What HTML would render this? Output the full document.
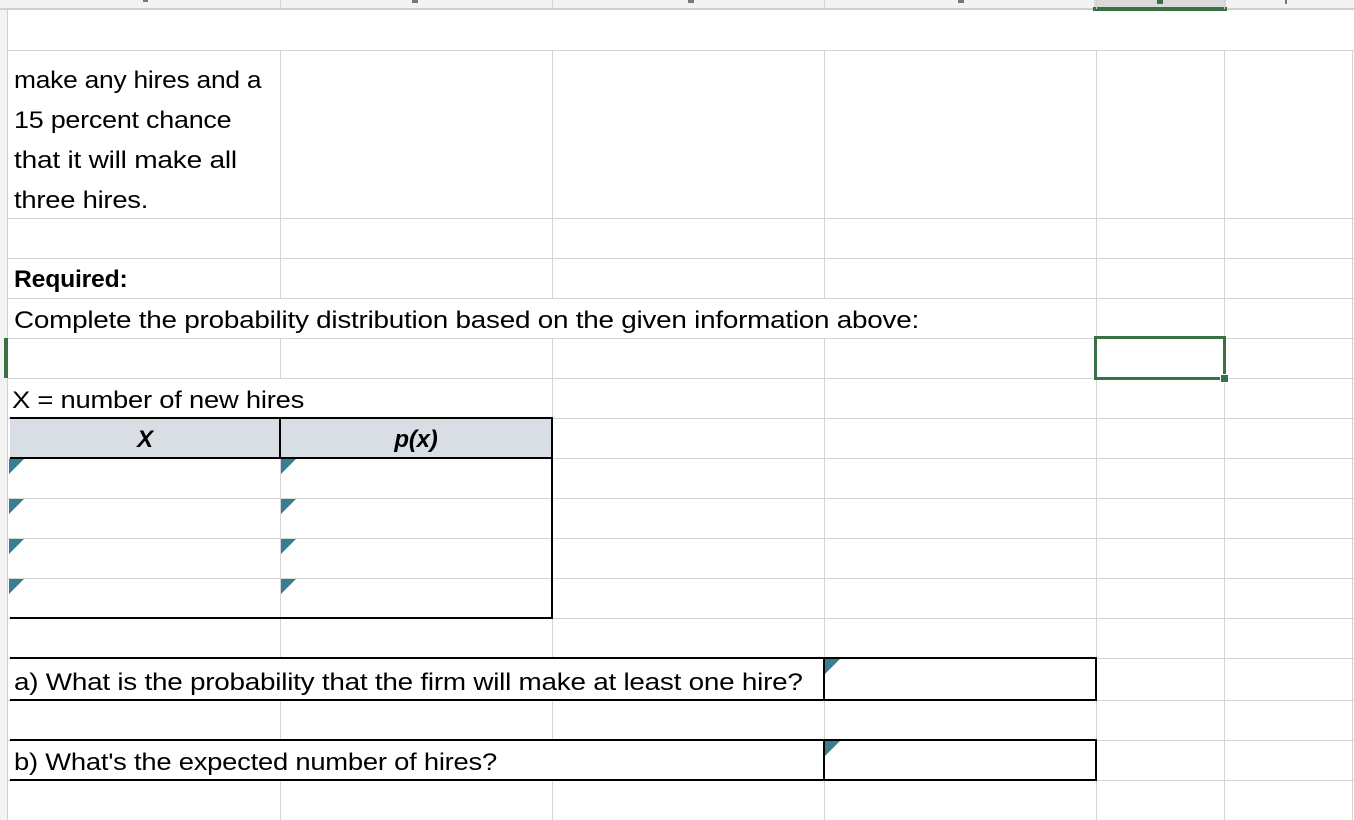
<!DOCTYPE html>
<html><head><meta charset="utf-8"><style>
*{margin:0;padding:0;box-sizing:border-box}
body{width:1354px;height:820px;position:relative;overflow:hidden;background:#fff;font-family:"Liberation Sans",Arial,sans-serif;color:#000}
.a{position:absolute}
.h{position:absolute;height:1px;background:#d4d4d4}
.v{position:absolute;width:1px;background:#d4d4d4}
.t{position:absolute;font-size:24px;line-height:40px;white-space:nowrap;letter-spacing:-0.2px;transform-origin:0 50%;transform:scaleX(1.15)}
.tri{position:absolute;width:0;height:0;border-top:15px solid #3a7d91;border-right:15px solid transparent}
.bk{position:absolute;background:#000}
</style></head><body>
<div class="a" style="left:0;top:0;width:1354px;height:9px;background:#f3f3f3"></div>
<div class="a" style="left:1094px;top:0;width:132px;height:8px;background:#dadada"></div>
<div class="a" style="left:0;top:8px;width:1354px;height:2px;background:#d0d0d0"></div>
<div class="a" style="left:1093px;top:7px;width:134px;height:4px;background:#3a7046"></div>
<div class="v" style="left:280px;top:0;height:9px"></div>
<div class="v" style="left:552px;top:0;height:9px"></div>
<div class="v" style="left:824px;top:0;height:9px"></div>
<div class="v" style="left:1096px;top:0;height:9px"></div>
<div class="v" style="left:1224px;top:0;height:9px"></div>
<div class="a" style="left:143px;top:0;width:5px;height:2px;background:#777"></div>
<div class="a" style="left:412px;top:0;width:6px;height:3px;background:#777"></div>
<div class="a" style="left:688px;top:0;width:6px;height:3px;background:#777"></div>
<div class="a" style="left:958px;top:0;width:6px;height:3px;background:#777"></div>
<div class="a" style="left:1157px;top:0;width:6px;height:4px;background:#3a7046"></div>
<div class="a" style="left:1285px;top:0;width:2px;height:4px;background:#777"></div>
<div class="a" style="left:0;top:10px;width:8px;height:810px;background:#f3f3f3;border-right:1px solid #d0d0d0"></div>
<div class="a" style="left:4px;top:338px;width:4px;height:40px;background:#3a7046"></div>

<div class="h" style="left:8px;top:50px;width:1346px"></div>
<div class="h" style="left:8px;top:218px;width:1346px"></div>
<div class="h" style="left:8px;top:258px;width:1346px"></div>
<div class="h" style="left:8px;top:298px;width:1346px"></div>
<div class="h" style="left:8px;top:338px;width:1346px"></div>
<div class="h" style="left:8px;top:378px;width:1346px"></div>
<div class="h" style="left:8px;top:418px;width:1346px"></div>
<div class="h" style="left:8px;top:458px;width:1346px"></div>
<div class="h" style="left:8px;top:498px;width:1346px"></div>
<div class="h" style="left:8px;top:538px;width:1346px"></div>
<div class="h" style="left:8px;top:578px;width:1346px"></div>
<div class="h" style="left:8px;top:618px;width:1346px"></div>
<div class="h" style="left:8px;top:658px;width:1346px"></div>
<div class="h" style="left:8px;top:700px;width:1346px"></div>
<div class="h" style="left:8px;top:740px;width:1346px"></div>
<div class="h" style="left:8px;top:780px;width:1346px"></div>
<div class="v" style="left:280px;top:50px;height:770px"></div>
<div class="v" style="left:552px;top:50px;height:770px"></div>
<div class="v" style="left:824px;top:50px;height:770px"></div>
<div class="v" style="left:1096px;top:50px;height:770px"></div>
<div class="v" style="left:1224px;top:50px;height:770px"></div>
<div class="v" style="left:1352px;top:50px;height:770px"></div>
<div class="a" style="left:10px;top:299px;width:1080px;height:39px;background:#fff"></div>
<div class="a" style="left:10px;top:379px;width:540px;height:39px;background:#fff"></div>

<div class="t" style="left:14px;top:61px;transform:scaleX(1.097)">make any hires and a</div>
<div class="t" style="left:14px;top:101px;transform:scaleX(1.12)">15 percent chance</div>
<div class="t" style="left:14px;top:141px;transform:scaleX(1.17)">that it will make all</div>
<div class="t" style="left:14px;top:181px;transform:scaleX(1.14)">three hires.</div>
<div class="t" style="left:14px;top:260px;font-weight:bold;transform:scaleX(1.03)">Required:</div>
<div class="t" style="left:14px;top:301px;transform:scaleX(1.16)">Complete the probability distribution based on the given information above:</div>
<div class="t" style="left:12px;top:381px;transform:scaleX(1.14)">X = number of new hires</div>

<div class="a" style="left:10px;top:419px;width:542px;height:39px;background:#d9dde4"></div>
<div class="bk" style="left:10px;top:417px;width:543px;height:2px"></div>
<div class="bk" style="left:10px;top:457px;width:543px;height:2px"></div>
<div class="bk" style="left:10px;top:617px;width:543px;height:2px"></div>
<div class="bk" style="left:279px;top:417px;width:2px;height:41px"></div>
<div class="bk" style="left:551px;top:417px;width:2px;height:202px"></div>
<div class="t" style="left:10px;top:420px;width:270px;text-align:center;font-weight:bold;font-style:italic;transform:none">X</div>
<div class="t" style="left:280px;top:420px;width:272px;text-align:center;font-weight:bold;font-style:italic;transform:none">p(x)</div>
<div class="tri" style="left:9px;top:459px"></div>
<div class="tri" style="left:281px;top:459px"></div>
<div class="tri" style="left:9px;top:499px"></div>
<div class="tri" style="left:281px;top:499px"></div>
<div class="tri" style="left:9px;top:539px"></div>
<div class="tri" style="left:281px;top:539px"></div>
<div class="tri" style="left:9px;top:579px"></div>
<div class="tri" style="left:281px;top:579px"></div>

<div class="a" style="left:10px;top:659px;width:813px;height:40px;background:#fff"></div>
<div class="bk" style="left:10px;top:657px;width:1087px;height:2px"></div>
<div class="bk" style="left:10px;top:699px;width:1087px;height:2px"></div>
<div class="bk" style="left:823px;top:657px;width:2px;height:44px"></div>
<div class="bk" style="left:1095px;top:657px;width:2px;height:44px"></div>
<div class="t" style="left:14px;top:663px;transform:scaleX(1.16)">a) What is the probability that the firm will make at least one hire?</div>
<div class="tri" style="left:825px;top:659px"></div>
<div class="a" style="left:10px;top:741px;width:813px;height:39px;background:#fff"></div>
<div class="bk" style="left:10px;top:739px;width:1087px;height:2px"></div>
<div class="bk" style="left:10px;top:779px;width:1087px;height:2px"></div>
<div class="bk" style="left:823px;top:739px;width:2px;height:42px"></div>
<div class="bk" style="left:1095px;top:739px;width:2px;height:42px"></div>
<div class="t" style="left:14px;top:743px;transform:scaleX(1.14)">b) What's the expected number of hires?</div>
<div class="tri" style="left:825px;top:741px"></div>

<div class="a" style="left:1094px;top:336px;width:132px;height:44px;border:3px solid #3a7046"></div>
<div class="a" style="left:1220px;top:374px;width:9px;height:9px;background:#3a7046;border:1px solid #fff"></div>
</body></html>
